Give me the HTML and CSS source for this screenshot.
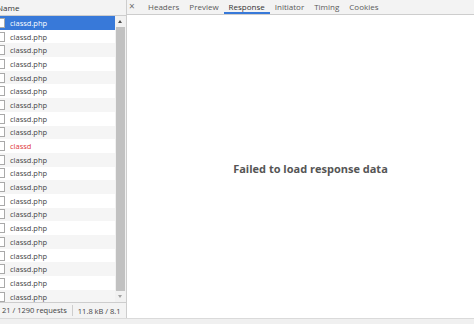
FILE: index.html
```html
<!DOCTYPE html>
<html lang="en">
<head>
    <meta charset="UTF-8">
    <meta name="viewport" content="width=device-width, initial-scale=1.0">
    <title>Network - Response</title>
    <link rel="stylesheet" href="styles.css">
</head>
<body>
    <div class="app">
        <div class="main">
            <div class="left">
                <div class="name-header">Name</div>
                <div class="list-wrap">
                    <div class="list">
                        <div class="row selected"><span class="box"></span>classd.php</div>
                        <div class="row"><span class="box"></span>classd.php</div>
                        <div class="row"><span class="box"></span>classd.php</div>
                        <div class="row"><span class="box"></span>classd.php</div>
                        <div class="row"><span class="box"></span>classd.php</div>
                        <div class="row"><span class="box"></span>classd.php</div>
                        <div class="row"><span class="box"></span>classd.php</div>
                        <div class="row"><span class="box"></span>classd.php</div>
                        <div class="row"><span class="box"></span>classd.php</div>
                        <div class="row failed"><span class="box"></span>classd</div>
                        <div class="row"><span class="box"></span>classd.php</div>
                        <div class="row"><span class="box"></span>classd.php</div>
                        <div class="row"><span class="box"></span>classd.php</div>
                        <div class="row"><span class="box"></span>classd.php</div>
                        <div class="row"><span class="box"></span>classd.php</div>
                        <div class="row"><span class="box"></span>classd.php</div>
                        <div class="row"><span class="box"></span>classd.php</div>
                        <div class="row"><span class="box"></span>classd.php</div>
                        <div class="row"><span class="box"></span>classd.php</div>
                        <div class="row"><span class="box"></span>classd.php</div>
                        <div class="row"><span class="box"></span>classd.php</div>
                    </div>
                    <div class="scrollbar">
                        <div class="arrow up"></div>
                        <div class="thumb"></div>
                        <div class="arrow down"></div>
                    </div>
                </div>
                <div class="footer">
                    <span class="count">21 / 1290 requests</span>
                    <span class="size">11.8 kB / 8.1</span>
                </div>
            </div>
            <div class="right">
                <div class="tabs">
                    <span class="close">&times;</span>
                    <span class="tab">Headers</span>
                    <span class="tab">Preview</span>
                    <span class="tab active">Response</span>
                    <span class="tab">Initiator</span>
                    <span class="tab">Timing</span>
                    <span class="tab">Cookies</span>
                </div>
                <div class="empty">Failed to load response data</div>
            </div>
        </div>
        <div class="bottom"></div>
    </div>
</body>
</html>
```
FILE: styles.css
```css
body {
    margin: 0;
    font-family: "Open Sans", "Noto Sans", sans-serif;
    font-size: 8px;
    color: #333333;
    background-color: #ffffff;
}
.app {
    width: 474px;
    height: 324px;
    display: flex;
    flex-direction: column;
    overflow: hidden;
}
.main {
    flex: 1;
    display: flex;
    min-height: 0;
}
.left {
    width: 126px;
    display: flex;
    flex-direction: column;
    border-right: 1px solid #cdcdcd;
}
.name-header {
    height: 15px;
    line-height: 15px;
    text-indent: -3px;
    background-color: #f3f3f3;
    border-bottom: 1px solid #cdcdcd;
    color: #333333;
}
.list-wrap {
    flex: 1;
    display: flex;
    min-height: 0;
}
.list {
    flex: 1;
    overflow: hidden;
}
.row {
    height: 13.7px;
    display: flex;
    align-items: center;
    font-size: 7.5px;
    color: #444444;
    white-space: nowrap;
}
.row:nth-child(odd) {
    background-color: #f5f5f5;
}
.row.selected {
    background-color: #3879d9;
    color: #ffffff;
}
.row.failed {
    color: #e0393a;
}
.box {
    width: 9px;
    height: 10px;
    margin-left: -4px;
    margin-right: 5px;
    background-color: #ffffff;
    border: 1px solid #a9a9a9;
    box-sizing: border-box;
}
.scrollbar {
    width: 11px;
    display: flex;
    flex-direction: column;
    background-color: #f1f1f1;
}
.arrow {
    height: 11px;
    position: relative;
}
.arrow::after {
    content: "";
    position: absolute;
    left: 3px;
    width: 0;
    height: 0;
    border-left: 2.5px solid transparent;
    border-right: 2.5px solid transparent;
}
.arrow.up::after {
    top: 4px;
    border-bottom: 3px solid #505050;
}
.arrow.down::after {
    top: 4px;
    border-top: 3px solid #a3a3a3;
}
.thumb {
    flex: 1;
    margin: 0 1px;
    background-color: #c1c1c1;
}
.footer {
    height: 15px;
    display: flex;
    align-items: center;
    border-top: 1px solid #cdcdcd;
    background-color: #f3f3f3;
    font-size: 7.5px;
    color: #444444;
    white-space: nowrap;
    overflow: hidden;
}
.count {
    padding: 0 5px 0 2px;
    border-right: 1px solid #cdcdcd;
    line-height: 11px;
}
.size {
    padding-left: 5px;
}
.right {
    flex: 1;
    display: flex;
    flex-direction: column;
}
.tabs {
    height: 14px;
    display: flex;
    align-items: stretch;
    background-color: #f3f3f3;
    border-bottom: 1px solid #cdcdcd;
    white-space: nowrap;
}
.close {
    width: 14px;
    padding-left: 2px;
    line-height: 13px;
    font-size: 10px;
    color: #6e6e6e;
}
.tab {
    padding: 0 5px;
    line-height: 14px;
    color: #5a5a5a;
    box-sizing: border-box;
}
.tab.active {
    color: #333333;
    border-bottom: 2px solid #3879d9;
}
.empty {
    flex: 1;
    display: flex;
    align-items: center;
    justify-content: center;
    padding: 4px 0 0 20px;
    font-size: 11px;
    font-weight: bold;
    color: #555555;
}
.bottom {
    height: 6px;
    background-color: #f0f0f0;
    border-top: 1px solid #dadada;
    box-sizing: border-box;
}
```
